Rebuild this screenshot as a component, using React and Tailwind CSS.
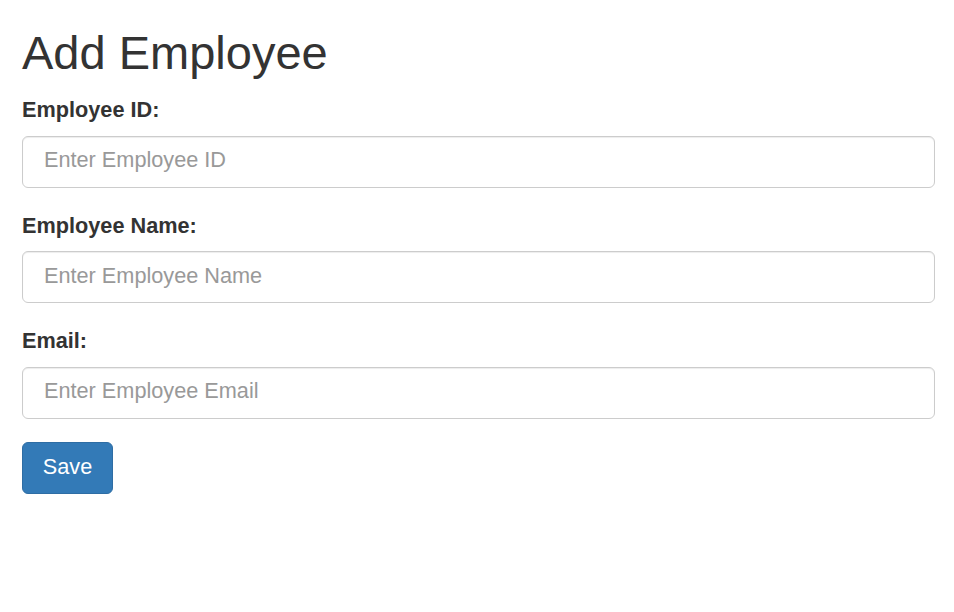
import React from "react";

function Field({ label, placeholder, type = "text" }) {
  return (
    <div className="mb-[23px]">
      <label className="block text-[21.7px] leading-[30px] font-bold text-[#333] mb-[10.5px]">
        {label}
      </label>
      <input
        type={type}
        placeholder={placeholder}
        className="block w-full h-[52px] pl-[21px] pr-[19px] pb-[3px] text-[21.7px] text-[#555] bg-white border border-[#ccc] rounded-[6px] shadow-[inset_0_1px_1px_rgba(0,0,0,0.075)] placeholder:text-[#999] outline-none"
      />
    </div>
  );
}

export default function App() {
  return (
    <div
      className="min-h-[612px] bg-white pl-[22px] pr-[19px]"
      style={{ fontFamily: '"Liberation Sans", Arial, Helvetica, sans-serif' }}
    >
      <h2 className="pt-[27px] mb-[16px] text-[47px] leading-[52px] font-normal text-[#333]">
        Add Employee
      </h2>
      <form onSubmit={(e) => e.preventDefault()}>
        <Field label="Employee ID:" placeholder="Enter Employee ID" />
        <Field label="Employee Name:" placeholder="Enter Employee Name" />
        <Field label="Email:" placeholder="Enter Employee Email" type="email" />
        <button
          type="submit"
          className="h-[52px] w-[91px] text-[21.7px] text-white bg-[#337ab7] border border-[#2e6da4] rounded-[6px]"
        >
          Save
        </button>
      </form>
    </div>
  );
}
